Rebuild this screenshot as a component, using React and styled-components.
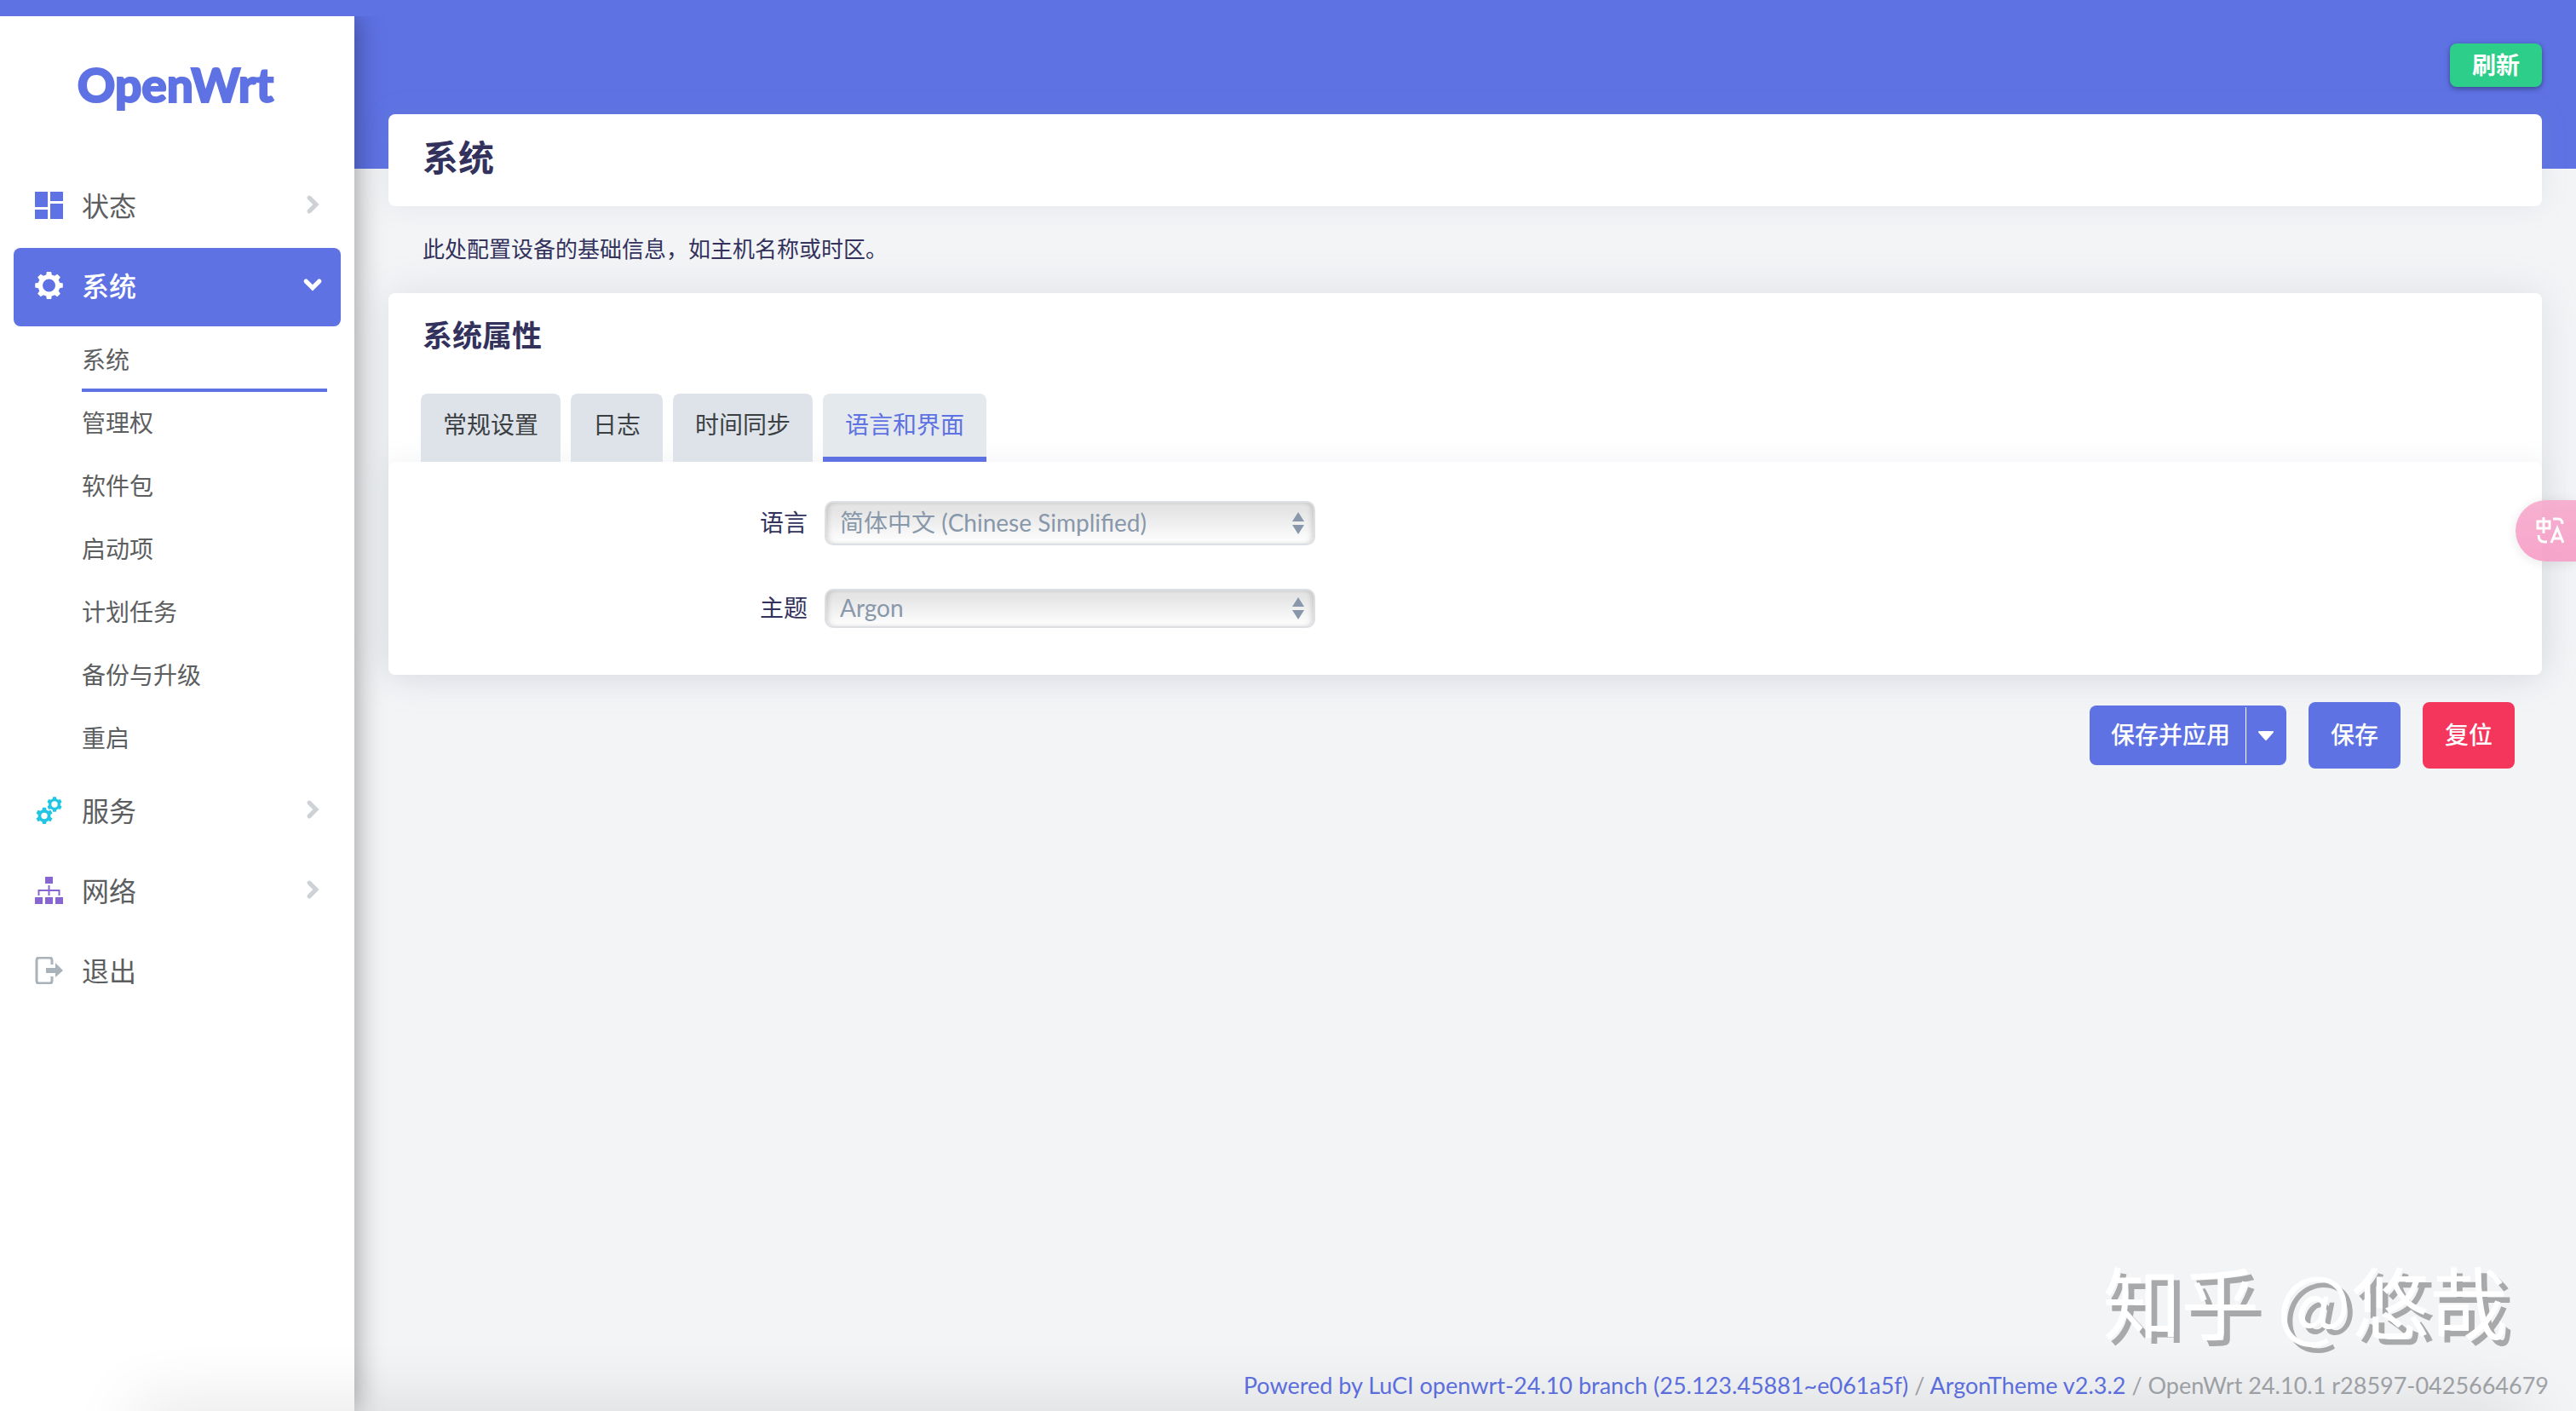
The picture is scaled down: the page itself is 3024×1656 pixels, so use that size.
import React from 'react';
import styled, { createGlobalStyle } from 'styled-components';

const menu = [
    { name: '状态', icon: 'status', color: '#5e72e4' },
    {
        name: '系统',
        icon: 'system',
        color: '#fff',
        active: true,
        children: ['系统', '管理权', '软件包', '启动项', '计划任务', '备份与升级', '重启'],
    },
    { name: '服务', icon: 'services', color: '#22c5e2' },
    { name: '网络', icon: 'network', color: '#8866d2' },
    { name: '退出', icon: 'logout', color: '#aab2ba', leaf: true },
];

const tabs = ['常规设置', '日志', '时间同步', '语言和界面'];

// points of a toothed wheel, used for the single gear and for the pair
function gear(cx, cy, r, inner, teeth) {
    const step = (Math.PI * 2) / teeth;
    const points = [];
    for (let i = 0; i < teeth; i++) {
        const a = i * step - Math.PI / 2;
        [[-0.32, inner], [-0.2, r], [0.2, r], [0.32, inner]].forEach(([t, d]) => {
            points.push(`${(cx + Math.cos(a + t * step) * d).toFixed(2)} ${(cy + Math.sin(a + t * step) * d).toFixed(2)}`);
        });
    }
    return `M${points.join('L')}Z`;
}

function hole(cx, cy, r) {
    return `M${cx - r} ${cy}a${r} ${r} 0 1 0 ${r * 2} 0a${r} ${r} 0 1 0 ${-r * 2} 0Z`;
}

const icons = {
    status: <path d="M0 0h15v18H0zM18 0h15v11H18zM0 21h15v11H0zM18 14h15v18H18z" />,
    system: <path fillRule="evenodd" d={gear(16.5, 16, 16.5, 13, 8) + hole(16.5, 16, 7.5)} />,
    services: (
        <path
            fillRule="evenodd"
            d={gear(23, 9, 9, 7, 6) + hole(23, 9, 3.7) + gear(11, 22.5, 10, 7.5, 6) + hole(11, 22.5, 3.7)}
        />
    ),
    network: (
        <>
            <path d="M12 0h9v8h-9zM0 24h9v8H0zM12 24h9v8h-9zM24 24h9v8h-9z" />
            <path d="M16.5 10v12M4.5 22v-6h24v6" fill="none" stroke="currentColor" strokeWidth="2" />
        </>
    ),
    logout: (
        <>
            <path d="M20 9V4q0-3-3-3H5Q2 1 2 4v24q0 3 3 3h12q3 0 3-3v-5" fill="none" stroke="currentColor" strokeWidth="3" />
            <path d="M13 13h11V7l9 9-9 8v-5H13z" />
        </>
    ),
};

function MenuItem({ item }) {
    return (
        <li>
            <MenuLink href="#" $active={item.active}>
                <MenuIcon viewBox="0 0 33 32" $color={item.color}>{icons[item.icon]}</MenuIcon>
                <span>{item.name}</span>
                {!item.leaf && (
                    <Arrow viewBox="0 0 20 20" $open={item.active}>
                        <path d="M7 4l6 6-6 6" />
                    </Arrow>
                )}
            </MenuLink>
            {item.children && (
                <SubMenu>
                    {item.children.map((child, i) => (
                        <li key={child}><SubLink href="#" $active={i === 0}>{child}</SubLink></li>
                    ))}
                </SubMenu>
            )}
        </li>
    );
}

function SelectField({ id, label, value, compact }) {
    return (
        <Field>
            <label htmlFor={id}>{label}</label>
            <SelectBox>
                <Select id={id} defaultValue={value} $compact={compact}>
                    <option>{value}</option>
                </Select>
                <SelectArrows viewBox="0 0 14 26">
                    <path d="M7 0l7 11H0zM7 26l7-11H0z" />
                </SelectArrows>
            </SelectBox>
        </Field>
    );
}

function App() {
    return (
        <>
            <GlobalStyle />
            <Page>
                <Sidebar>
                    <Brand href="#">OpenWrt</Brand>
                    <nav>
                        <Menu>
                            {menu.map((item) => <MenuItem key={item.name} item={item} />)}
                        </Menu>
                    </nav>
                </Sidebar>
                <Main>
                    <Header>
                        <RefreshButton type="button">刷新</RefreshButton>
                    </Header>
                    <Content>
                        <TitleCard><h2>系统</h2></TitleCard>
                        <Description>此处配置设备的基础信息，如主机名称或时区。</Description>
                        <Section>
                            <h3>系统属性</h3>
                            <Tabs role="tablist">
                                {tabs.map((tab) => (
                                    <Tab key={tab} type="button" role="tab" $active={tab === '语言和界面'}>{tab}</Tab>
                                ))}
                            </Tabs>
                            <Panel>
                                <SelectField id="lang" label="语言" value="简体中文 (Chinese Simplified)" />
                                <SelectField id="theme" label="主题" value="Argon" compact />
                            </Panel>
                        </Section>
                        <Actions>
                            <ApplyGroup>
                                <ApplyButton type="button">保存并应用</ApplyButton>
                                <CaretButton type="button" aria-label="更多">
                                    <svg width="20" height="12" viewBox="0 0 20 12">
                                        <path d="M2 1h16l-8 9z" fill="#fff" stroke="#fff" strokeWidth="2" strokeLinejoin="round" />
                                    </svg>
                                </CaretButton>
                            </ApplyGroup>
                            <Button type="button">保存</Button>
                            <Button type="button" $danger>复位</Button>
                        </Actions>
                    </Content>
                    <Footer>
                        <a href="#">Powered by LuCI openwrt-24.10 branch (25.123.45881~e061a5f)</a>
                        {' / '}
                        <a href="#">ArgonTheme v2.3.2</a>
                        {' / OpenWrt 24.10.1 r28597-0425664679'}
                    </Footer>
                </Main>
                <Translate type="button" aria-label="翻译">
                    <svg width="34" height="32" viewBox="0 0 34 32" fill="none" stroke="#fff" strokeWidth="3">
                        <path d="M2 5h14v8H2zM9 0v19M20 2h6q5 0 5 6M3 21q0 8 7 8h3M18 30l7-17 7 17M21 25h9" />
                    </svg>
                </Translate>
                <Watermark>知乎 @悠哉</Watermark>
                <BottomShade />
            </Page>
        </>
    );
}

const GlobalStyle = createGlobalStyle`
    * {
        box-sizing: border-box;
    }
    body {
        margin: 0;
        background: #f3f4f6;
        color: #32325d;
        font-family: Lato, 'Noto Sans CJK SC', sans-serif;
        font-size: 28px;
    }
    button, select {
        font: inherit;
    }
    a {
        text-decoration: none;
    }
`;

const Page = styled.div`
    display: flex;
    min-height: 100vh;
    background: linear-gradient(#5e72e4, #5e72e4) top / 100% 198px no-repeat;
`;

const Sidebar = styled.aside`
    flex: 0 0 416px;
    margin-top: 19px;
    background: #fff;
    box-shadow: 0 0 32px rgba(0, 0, 0, 0.4);
    clip-path: inset(0 -40px 0 0);
    z-index: 1;
`;

const Brand = styled.a`
    display: block;
    height: 178px;
    padding: 45px 4px 0 0;
    color: #5e72e4;
    font-size: 55px;
    font-weight: 900;
    line-height: 70px;
    text-align: center;
    -webkit-text-stroke: 2px #5e72e4;
`;

const Menu = styled.ul`
    margin: 0;
    padding: 0 16px;
    list-style: none;
`;

const MenuLink = styled.a`
    display: flex;
    align-items: center;
    gap: 22px;
    height: 92px;
    margin-bottom: 2px;
    padding: 0 20px 4px 25px;
    border-radius: 8px;
    background: ${(p) => (p.$active ? '#5e72e4' : 'none')};
    color: ${(p) => (p.$active ? '#fff' : '#5c5e60')};
    font-size: 32px;
    font-weight: ${(p) => (p.$active ? 500 : 400)};

    span {
        flex: 1;
        padding-bottom: 2px;
    }
`;

const MenuIcon = styled.svg`
    width: 33px;
    height: 32px;
    fill: currentColor;
    color: ${(p) => p.$color};
`;

const Arrow = styled.svg`
    width: 26px;
    height: 26px;
    margin-bottom: 2px;
    fill: none;
    stroke: ${(p) => (p.$open ? '#fff' : '#ced1d5')};
    stroke-width: 4;
    stroke-linecap: round;
    transform: ${(p) => (p.$open ? 'rotate(90deg)' : 'none')};
`;

const SubMenu = styled.ul`
    margin: 0;
    padding: 1px 16px 3px 80px;
    list-style: none;
`;

const SubLink = styled.a`
    display: block;
    height: 74px;
    border-bottom: 4px solid ${(p) => (p.$active ? '#5e72e4' : 'transparent')};
    color: #5c5e60;
    line-height: 72px;
`;

const Main = styled.main`
    display: flex;
    flex: 1;
    flex-direction: column;
    min-width: 0;
`;

const Header = styled.header`
    display: flex;
    justify-content: flex-end;
    height: 134px;
    padding: 51px 40px 0;
`;

const RefreshButton = styled.button`
    height: 51px;
    padding: 0 26px;
    border: 0;
    border-radius: 8px;
    background: #2dce89;
    box-shadow: 0 2px 6px rgba(0, 0, 0, 0.4);
    color: #fff;
    font-weight: 700;
    line-height: 51px;
`;

const Content = styled.div`
    flex: 1;
    padding: 0 40px;
`;

const TitleCard = styled.div`
    height: 108px;
    padding: 0 40px;
    border-radius: 8px;
    background: #fff;
    box-shadow: 0 0 32px rgba(136, 152, 170, 0.15);

    h2 {
        margin: 0;
        font-size: 42px;
        line-height: 102px;
    }
`;

const Description = styled.p`
    margin: 0;
    padding: 0 40px 2px;
    font-size: 26px;
    line-height: 100px;
`;

const Section = styled.section`
    border-radius: 8px;
    background: #fff;
    box-shadow: 0 0 48px rgba(136, 152, 170, 0.2);

    h3 {
        margin: 0;
        padding: 0 40px;
        font-size: 35px;
        line-height: 98px;
    }
`;

const Tabs = styled.div`
    display: flex;
    gap: 12px;
    padding: 20px 38px 0;
`;

const Tab = styled.button`
    height: 80px;
    padding: 0 26px 2px;
    border: 0;
    border-bottom: 6px solid ${(p) => (p.$active ? '#5e72e4' : '#dde3e9')};
    border-radius: 8px 8px 0 0;
    background: ${(p) => (p.$active ? '#e4e9ed' : '#dde3e9')};
    color: ${(p) => (p.$active ? '#5e72e4' : '#3c4043')};
    line-height: 70px;
`;

const Panel = styled.div`
    display: grid;
    gap: 51px;
    padding: 46px 0 55px;
    border-radius: 8px;
    background: #fff;
    box-shadow: 0 0 32px rgba(136, 152, 170, 0.12);
`;

const Field = styled.div`
    display: flex;
    align-items: center;
    gap: 20px;

    label {
        width: 492px;
        padding-bottom: 2px;
        line-height: 44px;
        text-align: right;
    }
`;

const SelectBox = styled.div`
    position: relative;
    width: 576px;
`;

const Select = styled.select`
    display: block;
    width: 100%;
    height: ${(p) => (p.$compact ? '46px' : '52px')};
    padding: 0 40px 2px 16px;
    border: 2px solid #dcdfe3;
    border-radius: 10px;
    appearance: none;
    background: linear-gradient(#e5e5e5 20%, #fff);
    box-shadow: inset 4px 0 6px -2px rgba(0, 0, 0, 0.15), inset -4px 0 6px -2px rgba(0, 0, 0, 0.15);
    color: #8898aa;
`;

const SelectArrows = styled.svg`
    position: absolute;
    top: calc(50% - 13px);
    right: 13px;
    width: 14px;
    height: 26px;
    fill: #8898aa;
    pointer-events: none;
`;

const Actions = styled.div`
    display: flex;
    align-items: center;
    justify-content: flex-end;
    gap: 26px;
    padding: 32px 32px 0;
`;

const Button = styled.button`
    height: 78px;
    padding: 0 26px 4px;
    border: 0;
    border-radius: 8px;
    background: ${(p) => (p.$danger ? '#f5365c' : '#5e72e4')};
    color: #fff;
    font-weight: 500;
`;

const ApplyGroup = styled.div`
    display: flex;
    padding: 2px 0;
    border-radius: 8px;
    background: #5e72e4;
`;

const ApplyButton = styled.button`
    height: 66px;
    padding: 0 18px 4px 25px;
    border: 0;
    background: none;
    color: #fff;
    font-weight: 500;
`;

const CaretButton = styled.button`
    display: flex;
    align-items: center;
    justify-content: center;
    width: 48px;
    padding: 2px 0 0;
    border: 0;
    border-left: 1px solid #fff;
    background: none;
`;

const Footer = styled.footer`
    padding: 0 32px 10px;
    color: #a2a5a9;
    font-size: 27px;
    line-height: 40px;
    text-align: right;

    a {
        color: #5e72e4;
    }
`;

const Translate = styled.button`
    position: fixed;
    top: 587px;
    right: 0;
    display: flex;
    align-items: center;
    width: 71px;
    height: 72px;
    padding: 0 0 0 24px;
    border: 0;
    border-radius: 36px 0 0 36px;
    background: linear-gradient(#f7a9cc, #f79cc6);
    box-shadow: 0 2px 16px rgba(0, 0, 0, 0.1);
    opacity: 0.9;
`;

const Watermark = styled.div`
    position: fixed;
    right: 80px;
    bottom: 66px;
    color: #fff;
    font-family: 'Noto Sans CJK SC', sans-serif;
    font-size: 92px;
    line-height: 130px;
    text-shadow: 7px 7px 0 #a8a9ab;
`;

const BottomShade = styled.div`
    position: fixed;
    right: 60px;
    bottom: -40px;
    left: 160px;
    height: 40px;
    box-shadow: 0 0 80px rgba(0, 0, 0, 0.16);
    z-index: 2;
    pointer-events: none;
`;

export default App;
